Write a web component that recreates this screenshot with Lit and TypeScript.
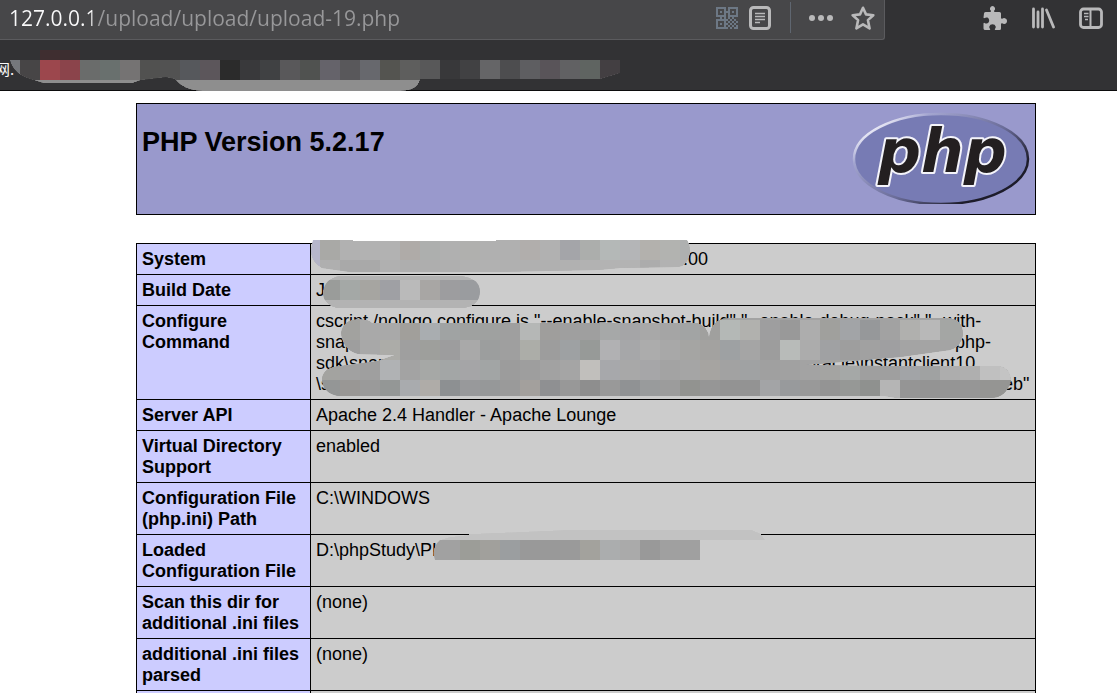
import { LitElement, html, svg, css } from "lit";
import { customElement } from "lit/decorators.js";

interface TileRow {
  x: number;
  y: number;
  h?: number;
  colors: string;
}

interface Smudge {
  id: string;
  outline: string;
  base: string;
  rows: TileRow[];
}

const TILE = 20;

const chromeSmudges: Smudge[] = [
  {
    id: "bookmarks",
    outline:
      "M10 60H40V50H80V60H620V73L600 79H420V80Q417 91 400 91H203Q184 91 175 79L166 77L141 80L133 83H43L30 79Q14 74 10 60Z",
    base: "#8e8e8e",
    rows: [
      { x: 40, y: 40, colors: "3f2e30 3c2e30" },
      {
        x: 0,
        y: 60,
        colors:
          "75787c 474546 9c474d 8b444b 6a6c6b 69706e 757373 515150 525252 56585c 5c565b 2b2b2b 39393b 404143 59585a 505250 65636a 59585b 67686d 545450 5e5e5d 585859 38383a 414143 656567 4d4d4f 5e5e61 595459 616163 5f6461 433f42",
      },
    ],
  },
];

const pageSmudges: Smudge[] = [
  {
    id: "system",
    outline:
      "M313 240H353V241H496V240H687Q690 245 690 252Q688 266 678 267L620 268L598 270L496 272H350L322 268Q311 262 311 250Z",
    base: "#b0b0b0",
    rows: [
      {
        x: 300,
        y: 240,
        colors:
          "b6b6cb a9a9a6 b1b1b1 b2b2b2 b2b2b2 afaba8 adafae b0b0b0 b0b0ae b0b0b0 b0b0b0 b1aeac b1b1b1 a4a5a9 acaeac b4b8b7 b4b5b7 b3b1ad b2b3b0 aeb0b0",
      },
      {
        x: 300,
        y: 260,
        colors:
          "b4b4c6 afafaf a9a9a9 a9a9a9 b0b0b0 aeaeae aeaeae afafaf b1b1b1 b1b1b1 b0b0b0 b0b0b0 b0b0b0 b1b1b1 b2b2b2 b3b3b3 b3b3b3 acacac b2b2b2 b2b2b2",
      },
    ],
  },
  {
    id: "build",
    outline: "M338 276H463Q480 279 480 292Q479 306 465 308H336Q323 304 323 292Q325 279 338 276Z",
    base: "#b3b3b3",
    rows: [{ x: 320, y: 280, colors: "9a9c9a a4a8a6 a6a5a1 9fa0a4 bababa a8a6a4 9d9d9f 9a9c9f" }],
  },
  {
    id: "configure",
    outline:
      "M341 333Q343 320 358 319Q368 319 372 323H697Q708 326 709 338Q711 318 730 318H950Q963 320 963 335Q961 347 950 350L900 357L806 365L890 366H1000Q1010 368 1011 380Q1007 398 990 398H897L885 396H338Q322 393 322 378Q324 367 340 366L378 361L395 355L358 354Q343 350 341 333Z",
    base: "#a3a3a3",
    rows: [
      {
        x: 340,
        y: 320,
        colors:
          "a2a29f a9a9a9 a9a9a9 a19f9b a9adb0 a0a3a3 9fa1a0 9fa1a0 9f9f9f b5b7b6 9f9e9c 9f9f9f 9f9f9f a6a8a8 a5a5a7 a8a8a8 a5a5a5 a2a4a4 a0a09e b4b8b6 b1b1ae 9e9e9f 999999 adadad a0a09d a2a4a7 96989a a2a2a2 b0b0ae b8b8b8 a4a6a4 a4a4a4",
      },
      {
        x: 340,
        y: 340,
        colors:
          "9e9e9e a8a8a8 acaca8 9f9f9f 9e9f9c 9d9d9e a9a9a9 9c9e9e 9f9f9f acada8 9d9d9d 9ea1a3 979a98 b1b1b3 a6a7a9 acacac a8a8a8 a5a5a3 a3a2a0 9ea1a3 a5a5a5 9d9d9d b8bbb9 acacac a0a1a3 9e9e9e a1a1a1 9f9fa1 a4a4a4 a4a4a4 a4a4a4 a4a4a4",
      },
      {
        x: 320,
        y: 360,
        colors:
          "a3a3a0 a1a1a1 9f9f9f b0b2b4 a3a3a3 a6a8a6 a3a6a6 a5a5a7 a2a5a5 9c9c9c 9e9e9e a2a2a2 a5a5a5 c1bfbc a7a8ab a8a8a8 a6a6a8 a3a3a3 a5a5a5 a6a4a1 a2a2a2 a0a2a3 a0a0a0 a1a1a1 a3a3a3 a4a4a2 a5a8a7 9f9f9f 9f9f9f a2a4a7 a0a2a2 adadad afafaf c0c0c0 c4c4c4",
      },
      {
        x: 320,
        y: 380,
        colors:
          "949696 999795 9a9a9a 949796 a9abae afaca8 8d9092 98999b 969899 9a9a9a a3a09d 8f9092 989898 8e8e8e 999999 909294 999b9c 9c9c9c 929390 969696 939393 939393 a3a4a6 989a9c 999999 949494 969896 8f918f b5b5b5 959595 949494 959595 969696 959593 959593",
      },
    ],
  },
  {
    id: "loaded",
    outline: "M469 535V534L565 530H752L761 534L765 540H700V560H435Q431 548 440 540L450 537Z",
    base: "#c2c2c2",
    rows: [
      {
        x: 420,
        y: 540,
        colors: "a1a1a1 a1a1a1 9c9d98 a1a09c 9b9ea0 999999 999999 9a9a9a a3a29d abadae aaaaaa 999999 a0a0a0 a0a0a0",
      },
    ],
  },
];

const drawSmudge = (s: Smudge) => svg`
  <clipPath id=${s.id}><path d=${s.outline} /></clipPath>
  <g clip-path="url(#${s.id})" shape-rendering="crispEdges">
    <path d=${s.outline} fill=${s.base} />
    ${s.rows.map((r) =>
      r.colors.split(" ").map(
        (c, i) => svg`<rect x=${r.x + i * TILE} y=${r.y} width=${TILE} height=${r.h ?? TILE} fill=${"#" + c} />`
      )
    )}
  </g>`;

// Module pattern of the QR glyph, eleven cells a side.
const QR = [
  "11111011111",
  "10001010001",
  "10101110101",
  "10001010001",
  "11111011111",
  "00101010100",
  "11111101010",
  "10001010101",
  "10101101010",
  "10001010101",
  "11111101011",
];

@customElement("browser-chrome")
export class BrowserChrome extends LitElement {
  static styles = css`
    :host {
      display: block;
      position: relative;
      z-index: 1;
      background: #323234;
      border-bottom: 1px solid #0c0c0d;
      color: #b9b9ba;
    }
    .toolbar {
      display: flex;
      align-items: flex-start;
    }
    .urlbar {
      flex: 1;
      min-width: 0;
      box-sizing: border-box;
      height: 40px;
      display: flex;
      align-items: center;
      padding: 0 9px 4px 9px;
      background: #474749;
      border: solid #5b5b5e;
      border-width: 0 1px 1px 0;
      border-radius: 0 0 3px 0;
    }
    .address {
      flex: 1;
      min-width: 0;
      height: 36px;
      padding: 0;
      border: 0;
      outline: 0;
      font: 21px/36px "Open Sans", "Noto Sans", sans-serif;
      color: transparent;
      background: linear-gradient(90deg, #f9f9fa 83px, #98989a 83px);
      -webkit-background-clip: text;
      background-clip: text;
    }
    button {
      display: block;
      width: 24px;
      height: 24px;
      padding: 0;
      border: 0;
      background: none;
      color: inherit;
    }
    button svg {
      display: block;
    }
    .page-actions {
      display: flex;
      align-items: center;
      gap: 18px;
    }
    .pair {
      display: flex;
      gap: 9px;
    }
    .qr {
      color: #6d7885;
    }
    .divider {
      width: 1px;
      height: 31px;
      background: #5f6670;
    }
    .tools {
      display: flex;
      gap: 24px;
      padding: 6px 14px 0 98px;
    }
    .bookmarks {
      height: 50px;
      overflow: hidden;
      display: flex;
      align-items: flex-start;
      box-sizing: border-box;
      padding-top: 18px;
    }
    .bookmark {
      margin-left: -5px;
      font: 15px/22px "Noto Sans CJK SC", sans-serif;
      color: #f9f9fa;
      text-decoration: none;
    }
    .smudges {
      position: absolute;
      top: 0;
      left: 0;
      pointer-events: none;
    }
  `;

  render() {
    return html`
      <div class="toolbar">
        <div class="urlbar">
          <input class="address" aria-label="Address" spellcheck="false" .value=${"127.0.0.1/upload/upload/upload-19.php"} />
          <div class="page-actions">
            <div class="pair">
              <button class="qr" aria-label="QR code">
                <svg width="24" height="24" fill="currentColor" shape-rendering="crispEdges">
                  ${QR.map((line, y) =>
                    [...line].map((c, x) =>
                      c === "1" ? svg`<rect x=${x * 2 + 1} y=${y * 2 + 1} width="2" height="2" />` : null
                    )
                  )}
                </svg>
              </button>
              <button aria-label="Reader view">
                <svg width="24" height="24" fill="none" stroke="currentColor">
                  <rect x="2.5" y="1.5" width="19" height="21" rx="3" stroke-width="3" />
                  <path d="M7 7.5h10M7 10.5h10M7 13.5h10M7 16.5h5" stroke-width="1.5" />
                </svg>
              </button>
            </div>
            <span class="divider"></span>
            <button aria-label="Page actions">
              <svg width="24" height="24" fill="currentColor">
                <circle cx="3" cy="12" r="3" /><circle cx="12" cy="12" r="3" /><circle cx="21" cy="12" r="3" />
              </svg>
            </button>
            <button aria-label="Bookmark this page">
              <svg width="24" height="24" fill="none" stroke="currentColor" stroke-width="2.6" stroke-linejoin="round">
                <path d="M12 1.8L15 8.4L22.3 9.2L16.9 14.1L18.6 22.4L12 18.4L5.4 22.4L7.1 14.1L1.7 9.2L9 8.4Z" />
              </svg>
            </button>
          </div>
        </div>
        <div class="tools">
          <button aria-label="Extensions">
            <svg width="24" height="24" fill="currentColor">
              <path
                d="M1 7.5q0-1.5 1.5-1.5H7.3q1-.2.6-1.2Q6.5 3.6 7 2Q7.8 0 9.5 0T12 2Q12.5 3.6 11.1 4.8Q10.7 5.8 11.7 6H16.5Q18 6 18 7.5V12q.2 1 1.2.8Q20 12 21.2 12Q24 12.5 24 15T21.2 18Q20 18 19.2 17.2Q18.2 17 18 18V22.5Q18 24 16.5 24H12.3q-.8-.2-.4-1.1Q13 22 12.7 20.5Q12 18.3 9.5 18.3T6.3 20.5Q6 22 7.1 22.9Q7.5 23.8 6.7 24H2.5Q.5 24 .5 22.5V17.5Q.6 16.5 1.6 16.9Q3 18 4.5 17.3Q6.2 16.5 6.2 14.5T4.5 11.6Q3 11 1.6 12.1Q.7 12.5.5 11.5Z"
              />
            </svg>
          </button>
          <button aria-label="Library">
            <svg width="24" height="24" fill="none" stroke="currentColor" stroke-width="2.8" stroke-linecap="round">
              <path d="M2.5 3V21M7 6V21M11.5 3V21M15.500 4L22.500 21" />
            </svg>
          </button>
          <button aria-label="Sidebars">
            <svg width="24" height="24" fill="none" stroke="currentColor">
              <rect x="1.5" y="3" width="21" height="18.5" rx="3" stroke-width="2.8" />
              <path d="M11.5 3V21" stroke-width="2" />
              <path d="M5 7.5h4.5M5 10.5h4.5M6 13.5h3" stroke-width="1.5" />
            </svg>
          </button>
        </div>
      </div>
      <nav class="bookmarks"><a class="bookmark" href="#">网.</a></nav>
      <svg class="smudges" width="640" height="92" aria-hidden="true">${chromeSmudges.map(drawSmudge)}</svg>
    `;
  }
}

@customElement("php-info")
export class PhpInfo extends LitElement {
  static styles = css`
    :host {
      display: block;
      position: relative;
      padding: 12px 81px 0 136px;
      background: #fff;
      color: #000;
      font: 18px/21px "Liberation Sans", Arial, sans-serif;
    }
    .banner {
      display: flex;
      justify-content: space-between;
      align-items: flex-start;
      box-sizing: border-box;
      height: 112px;
      padding: 4px 5px;
      border: 1px solid #000;
      background: #9999cc;
    }
    h1 {
      margin: 19px 0 0;
      font-size: 27px;
      line-height: 31px;
    }
    .logo {
      display: block;
    }
    .wordmark {
      font: oblique bold 60px "DejaVu Sans", sans-serif;
    }
    table {
      width: 100%;
      margin-top: 28px;
      border-collapse: collapse;
      table-layout: fixed;
    }
    .name {
      width: 174px;
    }
    th,
    td {
      padding: 5px 4px 4px 5px;
      border: 1px solid #000;
      vertical-align: top;
      text-align: left;
      white-space: nowrap;
    }
    th {
      background: #ccccff;
      font-weight: bold;
      white-space: normal;
      padding-right: 0;
    }
    td {
      background: #cccccc;
    }
    .line {
      display: flex;
    }
    .gap-system {
      flex: 0 0 367px;
    }
    .gap-template {
      flex: 0 0 600px;
    }
    .gap-sdk {
      flex: 0 0 418px;
    }
    .gap-shared {
      flex: 0 0 660px;
    }
    .smudges {
      position: absolute;
      top: 0;
      left: 0;
      pointer-events: none;
    }
  `;

  private rows = [
    ["System", html`<span class="line"><span class="gap-system"></span>.00</span>`],
    ["Build Date", "J"],
    [
      "Configure Command",
      html`<span class="line">cscript /nologo configure.js "--enable-snapshot-build" "--enable-debug-pack" "--with-</span>
        <span class="line">snap<span class="gap-template"></span>php-</span>
        <span class="line">sdk\\snap<span class="gap-sdk"></span>oracle\\instantclient10</span>
        <span class="line">\\s<span class="gap-shared"></span>web"</span>`,
    ],
    ["Server API", "Apache 2.4 Handler - Apache Lounge"],
    ["Virtual Directory Support", "enabled"],
    ["Configuration File (php.ini) Path", "C:\\WINDOWS"],
    ["Loaded Configuration File", "D:\\phpStudy\\PH"],
    ["Scan this dir for additional .ini files", "(none)"],
    ["additional .ini files parsed", "(none)"],
    ["\u00a0", ""],
  ];

  render() {
    return html`
      <header class="banner">
        <h1>PHP Version 5.2.17</h1>
        <svg class="logo" width="180" height="96" role="img" aria-label="PHP logo">
          <defs>
            <linearGradient id="rim" x1="0.25" y1="0" x2="1" y2="0.6">
              <stop offset="0" stop-color="#e6e6f4" />
              <stop offset="0.15" stop-color="#a3a5d0" />
              <stop offset="0.6" stop-color="#6a6c98" />
              <stop offset="0.95" stop-color="#1d1c2a" />
            </linearGradient>
          </defs>
          <ellipse cx="91" cy="51" rx="87" ry="45" fill="#777bb4" stroke="url(#rim)" stroke-width="2.5" />
          <text
            class="wordmark"
            x="28"
            y="64"
            fill="#231f20"
            stroke="#f4f4fa"
            stroke-width="4"
            stroke-linejoin="round"
            paint-order="stroke"
          >php</text>
        </svg>
      </header>
      <table>
        <colgroup>
          <col class="name" />
          <col />
        </colgroup>
        <tbody>
          ${this.rows.map(([name, value]) => html`<tr><th scope="row">${name}</th><td>${value}</td></tr>`)}
        </tbody>
      </table>
      <svg class="smudges" width="1036" height="602" viewBox="0 91 1036 602" aria-hidden="true">
        ${pageSmudges.map(drawSmudge)}
      </svg>
    `;
  }
}

@customElement("app-root")
export class AppRoot extends LitElement {
  static styles = css`
    :host {
      display: block;
      height: 100vh;
      overflow: hidden;
      background: #fff;
    }
  `;

  render() {
    return html`<browser-chrome></browser-chrome><php-info></php-info>`;
  }
}
